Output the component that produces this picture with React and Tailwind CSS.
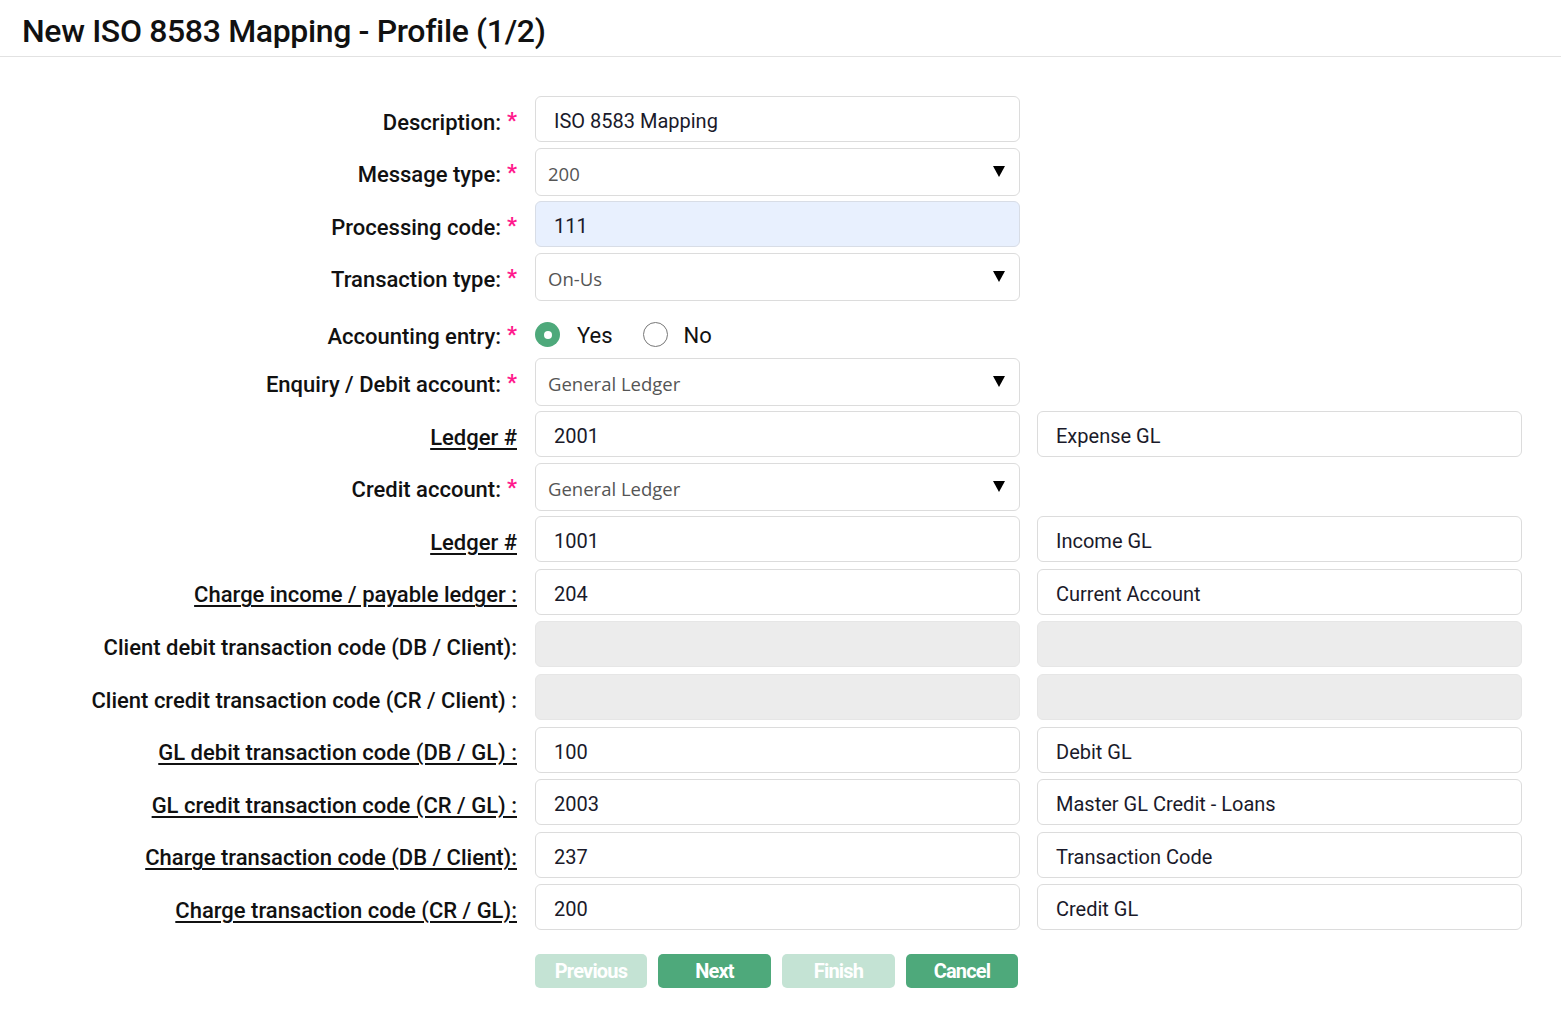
import React from "react";

const font = { fontFamily: "Roboto, 'Noto Sans', sans-serif" };

function Label({ text, req, link }) {
  return (
    <div className="w-[517px] shrink-0 flex justify-end items-center pt-[6px] text-[22px] font-medium text-[#111]">
      {link ? (
        <span className="underline decoration-[1.5px] underline-offset-[3px]">{text}</span>
      ) : (
        <span>{text}</span>
      )}
      {req && <span className="text-[#ff1a8c] ml-[6px] -mt-[4px] text-[22px] font-bold">*</span>}
    </div>
  );
}

function Input({ value, variant }) {
  const cls =
    variant === "auto"
      ? "bg-[#e8f0fe] border-[#d8dde6]"
      : variant === "disabled"
      ? "bg-[#ececec] border-[#e6e6e6]"
      : "bg-white border-[#dcdcdc]";
  return (
    <div className={`w-[485px] h-[46px] shrink-0 rounded-[6px] border ${cls} flex items-center pl-[18px] pt-[4px] text-[20px] text-[#1a1a2a]`}>
      {value}
    </div>
  );
}

function Select({ value }) {
  return (
    <div className="w-[485px] h-[48px] -my-[1px] shrink-0 rounded-[6px] border border-[#dcdcdc] bg-white flex items-center pl-[12px] pr-[14px] text-[#555]" style={{ fontFamily: "'Open Sans', sans-serif" }}>
      <span className="flex-1 text-[18.5px] pt-[4px]">{value}</span>
      <svg width="12" height="11" viewBox="0 0 12 11"><path d="M0 0 H12 L6 11 Z" fill="#000" /></svg>
    </div>
  );
}

function Row({ children }) {
  return <div className="flex items-center h-[46px]">{children}</div>;
}

function Gap() {
  return <div className="w-[18px] shrink-0" />;
}

function Gap2() {
  return <div className="w-[17px] shrink-0" />;
}

export default function App() {
  return (
    <div className="bg-white min-h-[1013px] w-[1561px]" style={font}>
      <div className="h-[57px] border-b border-[#e2e2e2] flex items-center pl-[22px]">
        <h1 className="text-[32px] font-medium text-[#111] tracking-[-0.35px] mt-[6px]">New ISO 8583 Mapping - Profile (1/2)</h1>
      </div>
      <div className="pt-[39px] flex flex-col gap-[6.55px]">
        <Row>
          <Label text="Description:" req />
          <Gap />
          <Input value="ISO 8583 Mapping" />
        </Row>
        <Row>
          <Label text="Message type:" req />
          <Gap />
          <Select value="200" />
        </Row>
        <Row>
          <Label text="Processing code:" req />
          <Gap />
          <Input value="111" variant="auto" />
        </Row>
        <Row>
          <Label text="Transaction type:" req />
          <Gap />
          <Select value="On-Us" />
        </Row>
        <Row>
          <div className="flex items-center h-full pt-[8px]">
            <Label text="Accounting entry:" req />
            <Gap />
            <div className="flex items-center text-[22px] text-[#111] pt-[3px]">
              <span className="w-[25px] h-[25px] rounded-full bg-[#4ea97b] flex items-center justify-center">
                <span className="w-[8px] h-[8px] rounded-full bg-white" />
              </span>
              <span className="ml-[17px] pt-[2px]">Yes</span>
              <span className="ml-[30px] w-[25px] h-[25px] rounded-full border border-[#777] bg-white" />
              <span className="ml-[16px] pt-[2px]">No</span>
            </div>
          </div>
        </Row>
        <Row>
          <Label text="Enquiry / Debit account:" req />
          <Gap />
          <Select value="General Ledger" />
        </Row>
        <Row>
          <Label text="Ledger #" link />
          <Gap />
          <Input value="2001" />
          <Gap2 />
          <Input value="Expense GL" />
        </Row>
        <Row>
          <Label text="Credit account:" req />
          <Gap />
          <Select value="General Ledger" />
        </Row>
        <Row>
          <Label text="Ledger #" link />
          <Gap />
          <Input value="1001" />
          <Gap2 />
          <Input value="Income GL" />
        </Row>
        <Row>
          <Label text="Charge income / payable ledger :" link />
          <Gap />
          <Input value="204" />
          <Gap2 />
          <Input value="Current Account" />
        </Row>
        <Row>
          <Label text="Client debit transaction code (DB / Client):" />
          <Gap />
          <Input value="" variant="disabled" />
          <Gap2 />
          <Input value="" variant="disabled" />
        </Row>
        <Row>
          <Label text="Client credit transaction code (CR / Client) :" />
          <Gap />
          <Input value="" variant="disabled" />
          <Gap2 />
          <Input value="" variant="disabled" />
        </Row>
        <Row>
          <Label text="GL debit transaction code (DB / GL) :" link />
          <Gap />
          <Input value="100" />
          <Gap2 />
          <Input value="Debit GL" />
        </Row>
        <Row>
          <Label text="GL credit transaction code (CR / GL) :" link />
          <Gap />
          <Input value="2003" />
          <Gap2 />
          <Input value="Master GL Credit - Loans" />
        </Row>
        <Row>
          <Label text="Charge transaction code (DB / Client):" link />
          <Gap />
          <Input value="237" />
          <Gap2 />
          <Input value="Transaction Code" />
        </Row>
        <Row>
          <Label text="Charge transaction code (CR / GL):" link />
          <Gap />
          <Input value="200" />
          <Gap2 />
          <Input value="Credit GL" />
        </Row>
      </div>
      <div className="flex pl-[535px] mt-[24px] gap-[11px]">
        <div className="w-[112px] h-[34px] rounded-[5px] flex items-center justify-center text-white text-[20px] font-bold tracking-[-0.8px] bg-[#c4e3d4]">Previous</div>
        <div className="w-[113px] h-[34px] rounded-[5px] flex items-center justify-center text-white text-[20px] font-bold tracking-[-0.8px] bg-[#4ea97b]">Next</div>
        <div className="w-[113px] h-[34px] rounded-[5px] flex items-center justify-center text-white text-[20px] font-bold tracking-[-0.8px] bg-[#c4e3d4]">Finish</div>
        <div className="w-[112px] h-[34px] rounded-[5px] flex items-center justify-center text-white text-[20px] font-bold tracking-[-0.8px] bg-[#4ea97b]">Cancel</div>
      </div>
    </div>
  );
}
